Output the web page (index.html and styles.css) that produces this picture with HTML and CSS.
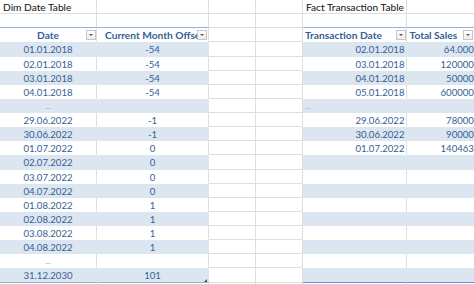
FILE: index.html
```html
<!DOCTYPE html>
<html>
<head>
<meta charset="utf-8">
<link rel="stylesheet" href="styles.css">
</head>
<body>
<div class="sheet">
  <div class="row">
    <div class="c title">Dim Date Table</div><div class="c"></div><div class="c"></div><div class="c"></div><div class="c title">Fact Transaction Table</div><div class="c"></div>
  </div>
  <div class="row">
    <div class="c top"></div><div class="c top"></div><div class="c"></div><div class="c"></div><div class="c top"></div><div class="c top"></div>
  </div>
  <div class="row">
    <div class="c hdr hA"><span class="t">Date</span><span class="dd"></span></div>
    <div class="c hdr hB"><span class="t">Current Month Offset</span><span class="dd"></span></div>
    <div class="c"></div><div class="c"></div>
    <div class="c hdr hE"><span class="t">Transaction Date</span><span class="dd"></span></div>
    <div class="c hdr hF"><span class="t">Total Sales</span><span class="dd"></span></div>
  </div>
  <div class="row">
    <div class="c band ctr">01.01.2018</div><div class="c band ctr">-54</div><div class="c"></div><div class="c"></div><div class="c band rt">02.01.2018</div><div class="c band sales">64.0000</div>
  </div>
  <div class="row">
    <div class="c w ctr">02.01.2018</div><div class="c w ctr">-54</div><div class="c"></div><div class="c"></div><div class="c w rt">03.01.2018</div><div class="c w sales">1200000</div>
  </div>
  <div class="row">
    <div class="c band ctr">03.01.2018</div><div class="c band ctr">-54</div><div class="c"></div><div class="c"></div><div class="c band rt">04.01.2018</div><div class="c band sales">500000</div>
  </div>
  <div class="row">
    <div class="c w ctr">04.01.2018</div><div class="c w ctr">-54</div><div class="c"></div><div class="c"></div><div class="c w rt">05.01.2018</div><div class="c w sales">6000000</div>
  </div>
  <div class="row">
    <div class="c band ctr dots">...</div><div class="c band"></div><div class="c"></div><div class="c"></div><div class="c band lf dots">...</div><div class="c band"></div>
  </div>
  <div class="row">
    <div class="c w ctr">29.06.2022</div><div class="c w ctr">-1</div><div class="c"></div><div class="c"></div><div class="c w rt">29.06.2022</div><div class="c w sales">780000</div>
  </div>
  <div class="row">
    <div class="c band ctr">30.06.2022</div><div class="c band ctr">-1</div><div class="c"></div><div class="c"></div><div class="c band rt">30.06.2022</div><div class="c band sales">900000</div>
  </div>
  <div class="row">
    <div class="c w ctr">01.07.2022</div><div class="c w ctr">0</div><div class="c"></div><div class="c"></div><div class="c w rt">01.07.2022</div><div class="c w sales">1404634</div>
  </div>
  <div class="row">
    <div class="c band ctr">02.07.2022</div><div class="c band ctr">0</div><div class="c"></div><div class="c"></div><div class="c band"></div><div class="c band"></div>
  </div>
  <div class="row">
    <div class="c w ctr">03.07.2022</div><div class="c w ctr">0</div><div class="c"></div><div class="c"></div><div class="c w"></div><div class="c w"></div>
  </div>
  <div class="row">
    <div class="c band ctr">04.07.2022</div><div class="c band ctr">0</div><div class="c"></div><div class="c"></div><div class="c band"></div><div class="c band"></div>
  </div>
  <div class="row">
    <div class="c w ctr">01.08.2022</div><div class="c w ctr">1</div><div class="c"></div><div class="c"></div><div class="c w"></div><div class="c w"></div>
  </div>
  <div class="row">
    <div class="c band ctr">02.08.2022</div><div class="c band ctr">1</div><div class="c"></div><div class="c"></div><div class="c band"></div><div class="c band"></div>
  </div>
  <div class="row">
    <div class="c w ctr">03.08.2022</div><div class="c w ctr">1</div><div class="c"></div><div class="c"></div><div class="c w"></div><div class="c w"></div>
  </div>
  <div class="row">
    <div class="c band ctr">04.08.2022</div><div class="c band ctr">1</div><div class="c"></div><div class="c"></div><div class="c band"></div><div class="c band"></div>
  </div>
  <div class="row">
    <div class="c w ctr dots">...</div><div class="c w"></div><div class="c"></div><div class="c"></div><div class="c w"></div><div class="c w"></div>
  </div>
  <div class="row">
    <div class="c band ctr end1">31.12.2030</div><div class="c band ctr end1 handle">101</div><div class="c"></div><div class="c"></div><div class="c band end2"></div><div class="c band end2"></div>
  </div>
  <div class="row">
    <div class="c"></div><div class="c"></div><div class="c"></div><div class="c"></div><div class="c"></div><div class="c"></div>
  </div>
</div>
</body>
</html>
```
FILE: styles.css
```css
html, body {
  margin: 0;
  padding: 0;
  background: #fff;
}
body {
  width: 474px;
  height: 284px;
  overflow: hidden;
  font-family: Lato, "Liberation Sans", sans-serif;
  font-size: 9.6px;
  color: #366092;
}
.sheet {
  width: 487px;
}
.row {
  display: grid;
  grid-template-columns: 97px 112px 47px 47px 104px 80px;
  height: 14.125px;
}
.c {
  box-sizing: border-box;
  min-width: 0;
  border-right: 1px solid #dedede;
  border-bottom: 1px solid #dedede;
  overflow: hidden;
  white-space: nowrap;
  line-height: 15.5px;
}
.band {
  background: #dce6f1;
  border-color: #dce6f1;
}
.w {
  border-bottom-color: #fff;
}
.top {
  border-bottom-color: #95b3d7;
}
.ctr {
  text-align: center;
}
.rt {
  text-align: right;
  padding-right: 1.5px;
}
.sales {
  text-align: right;
  padding-right: 6.5px;
}
.lf {
  padding-left: 2px;
}
.dots {
  color: #8aa0c0;
  font-size: 8px;
  line-height: 14px;
}
.title {
  color: #111;
  font-size: 10.2px;
  padding-left: 3px;
}
.hdr {
  display: flex;
  align-items: center;
  font-size: 10.2px;
  font-weight: 700;
  line-height: 14px;
  border-bottom-color: #fff;
}
.hdr .t {
  flex: 1;
  min-width: 0;
  overflow: hidden;
}
.hA .t {
  padding-left: 10px;
  text-align: center;
}
.hB .t {
  padding-left: 8px;
}
.hB .dd {
  margin-right: 1px;
}
.hE .t {
  padding-left: 2px;
}
.hF .t {
  padding-left: 2.5px;
}
.hF .dd {
  margin-right: 13px;
}
.dd {
  flex: none;
  width: 10px;
  height: 10px;
  box-sizing: border-box;
  border: 1px solid #c6c6c6;
  background: linear-gradient(#ffffff, #ececec);
  display: flex;
  align-items: center;
  justify-content: center;
}
.dd::after {
  content: "";
  width: 0;
  height: 0;
  border-left: 2.5px solid transparent;
  border-right: 2.5px solid transparent;
  border-top: 2.5px solid #555;
}
.end1 {
  border-bottom-color: #95b3d7;
}
.end2 {
  border-bottom-color: #6f8fd4;
}
.handle {
  position: relative;
}
.handle::after {
  content: "";
  position: absolute;
  right: 1px;
  bottom: 0;
  width: 0;
  height: 0;
  border-left: 3px solid transparent;
  border-bottom: 3px solid #3c4a6a;
}
```
